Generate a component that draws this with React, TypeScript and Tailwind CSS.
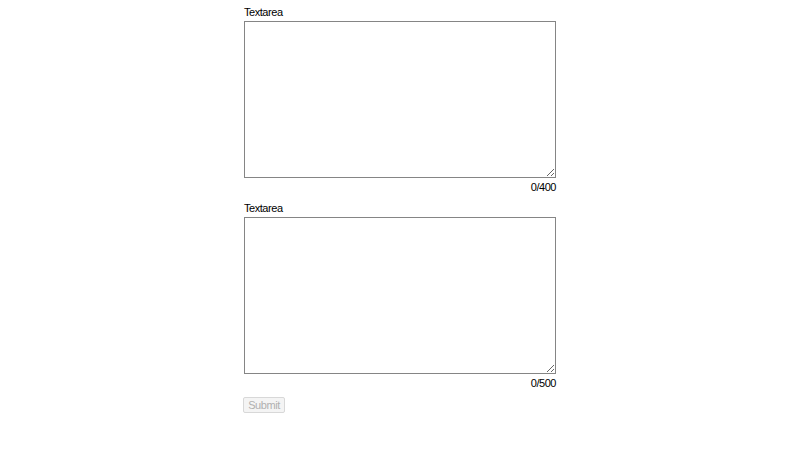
import React, { useState } from "react";

function Field({ max }: { max: number }) {
  const [v, setV] = useState("");
  return (
    <div className="flex flex-col">
      <label className="block text-[11px] leading-[12px] tracking-[-0.45px] mb-[3px]">Textarea</label>
      <textarea
        value={v}
        onChange={(e) => setV(e.target.value.slice(0, max))}
        className="block w-[312px] h-[157px] border border-[#858585] bg-white p-[2px] text-[11px]"
      />
      <div className="mt-[3px] text-right text-[11px] leading-[12px] tracking-[-0.45px]">{v.length}/{max}</div>
    </div>
  );
}

export default function App() {
  return (
    <div className="w-full min-h-[450px] bg-white text-black" style={{ fontFamily: '"Liberation Sans", Arial, sans-serif' }}>
      <div className="w-[312px] mx-auto pt-[6px] flex flex-col">
        <div className="mb-[9px]">
          <Field max={400} />
        </div>
        <Field max={500} />
        <div className="mt-[8px]">
          <button
            disabled
            className="h-[16px] w-[42px] flex items-center justify-center text-[11px] leading-[12px] tracking-[-0.45px] text-[#b0b0b0] bg-[#f4f4f4] border border-[#d8d8d8] rounded-[2px] ml-[-1px]"
          >
            Submit
          </button>
        </div>
      </div>
    </div>
  );
}
